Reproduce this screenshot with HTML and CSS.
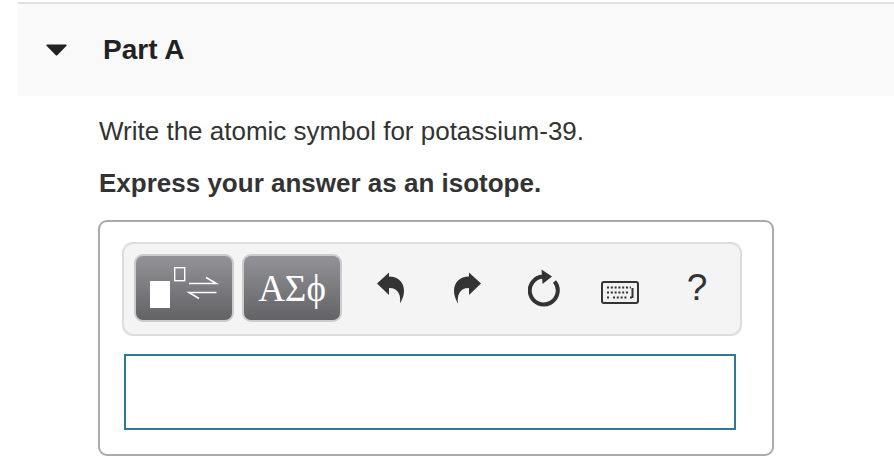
FILE: index.html
```html
<!DOCTYPE html>
<html lang="en">
<head>
<meta charset="utf-8">
<title>Part A</title>
<link rel="stylesheet" href="styles.css">
</head>
<body>
<section class="part">
  <header class="part-head">
    <svg class="caret" width="21" height="12" viewBox="0 0 21 12"><path d="M1 .5H20a.7.7 0 0 1 .5 1.2L11.3 11.2a1 1 0 0 1-1.5 0L.5 1.700A.7.7 0 0 1 1 .5Z" fill="#222"/></svg>
    <h2 class="part-title">Part A</h2>
  </header>
  <div class="part-body">
    <p class="prompt">Write the atomic symbol for potassium-39.</p>
    <p class="instruction">Express your answer as an isotope.</p>
    <div class="answer-box">
      <div class="toolbar">
        <button class="tpl-btn" type="button" aria-label="Templates">
          <svg width="96" height="64" viewBox="0 0 96 64">
            <rect x="14" y="25" width="20" height="27" fill="#fff"/>
            <rect x="38.700" y="11.700" width="10" height="13" fill="none" stroke="#fff" stroke-width="1.400"/>
            <path d="M53 27.500H80.500L70 21.500M80.500 36.500H53L63 42.500" fill="none" stroke="#fff" stroke-width="1.500"/>
          </svg>
        </button>
        <button class="tpl-btn greek" type="button">ΑΣϕ</button>
        <span class="tool">
          <svg width="27" height="32" viewBox="0 0 27 32"><path d="M0 11.500 12 .5V4.500C21 4.500 27 10 27 19 27 24 24.500 29 23 31.500 24 24 22 16 12 16V23Z" fill="#333"/></svg>
        </span>
        <span class="tool">
          <svg width="27" height="32" viewBox="0 0 27 32"><path d="M27 11.500 15 .5V4.500C6 4.500 0 10 0 19 0 24 2.500 29 4 31.500 3 24 5 16 15 16V23Z" fill="#333"/></svg>
        </span>
        <span class="tool">
          <svg width="34" height="38" viewBox="0 0 34 38"><path d="M26.500 12.500A14 14 0 1 1 15 7.500" fill="none" stroke="#333" stroke-width="4"/><path d="M13.500 .5 24 7.500 14.500 15Z" fill="#333"/></svg>
        </span>
        <span class="tool tool-keys">
          <svg width="38" height="23" viewBox="0 0 38 23">
            <rect x="1" y="1" width="36" height="21" rx="2" fill="#f1f1f1" stroke="#333" stroke-width="2"/>
            <path d="M6 6.500H30M6 11.500H27M6 16.500H8.500M12 16.500H26M29 16.500H32" fill="none" stroke="#333" stroke-width="2" stroke-dasharray="2 1.800"/>
            <path d="M31.500 7V17" fill="none" stroke="#333" stroke-width="2"/>
          </svg>
        </span>
        <span class="tool help">?</span>
      </div>
      <div class="answer-input"></div>
    </div>
  </div>
</section>
</body>
</html>
```
FILE: styles.css
```css
* { box-sizing: border-box; }
html, body { margin: 0; padding: 0; background: #fff; }
body {
  width: 894px;
  height: 468px;
  overflow: hidden;
  padding-top: 2px;
  font-family: "Liberation Sans", Arial, sans-serif;
  color: #333;
}
.part { margin-left: 18px; }
.part-head {
  display: flex;
  align-items: center;
  height: 94px;
  padding-left: 28px;
  background: #f9f9f9;
  border-top: 2px solid #e0e0e0;
}
.caret { flex: none; }
.part-title {
  margin: 0 0 0 36px;
  font-size: 28px;
  line-height: 34px;
  font-weight: 700;
  color: #222;
}
.part-body { padding: 18px 0 0 81px; }
.prompt, .instruction {
  margin: 0;
  font-size: 26px;
  line-height: 34px;
}
.instruction { margin-top: 18px; font-weight: 700; }
.answer-box {
  width: 676px;
  height: 236px;
  margin: 20px 0 0 -1px;
  padding: 20px 30px 0 22px;
  border: 2px solid #aaa;
  border-radius: 9px;
  background: #fff;
}
.toolbar {
  display: flex;
  align-items: center;
  width: 620px;
  height: 94px;
  padding: 0 4px 2px 10px;
  border: 2px solid #ddd;
  border-radius: 11px;
  background: #f4f4f4;
}
.tpl-btn {
  flex: none;
  width: 100px;
  height: 68px;
  padding: 0;
  margin-right: 8px;
  display: flex;
  align-items: center;
  justify-content: center;
  border: 2px solid #ccc;
  border-radius: 9px;
  background: linear-gradient(#929298, #636366);
  color: #fff;
}
.greek {
  margin-right: 10px;
  font-family: "Liberation Serif", "Times New Roman", serif;
  font-size: 37px;
}
.tool {
  flex: none;
  width: 77px;
  display: flex;
  align-items: center;
  justify-content: center;
}
.tool-keys { width: 74px; padding-top: 9px; }
.help {
  width: 80px;
  font-size: 37px;
  line-height: 36px;
  color: #333;
}
.answer-input {
  width: 612px;
  height: 76px;
  margin: 18px 0 0 2px;
  border: 2px solid #2f7896;
  background: #fff;
}
```
